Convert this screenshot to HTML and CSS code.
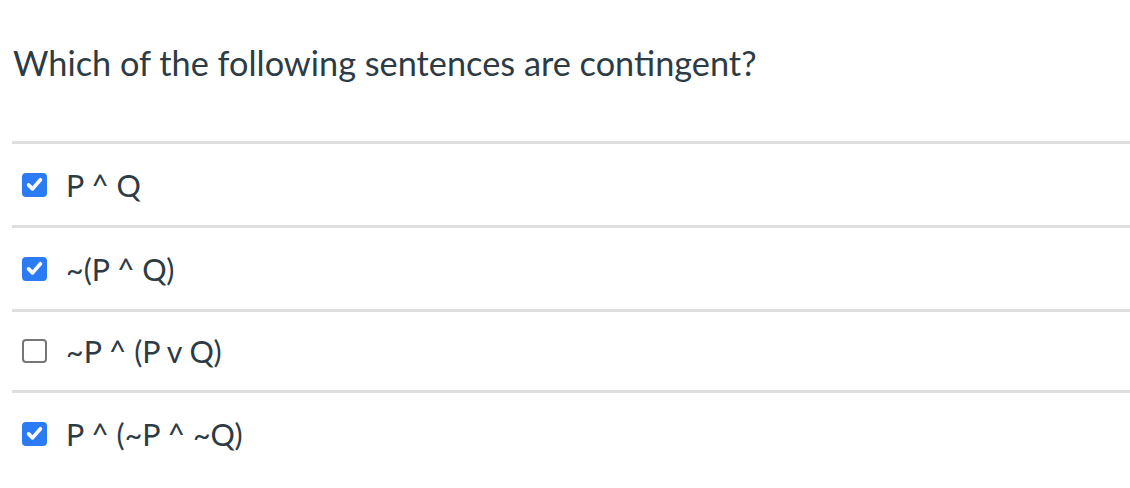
FILE: index.html
```html
<!DOCTYPE html>
<html>
<head>
<meta charset="utf-8">
<link rel="stylesheet" href="styles.css">
</head>
<body>
<div class="question">
  <div class="prompt">Which of the following sentences are contingent?</div>
  <div class="answers">
    <div class="answer">
      <span class="box checked"><svg viewBox="0 0 24 24" width="19" height="19"><path d="M4.5 12.5 L9.5 17.5 L19.5 6" fill="none" stroke="#fff" stroke-width="4.6" stroke-linecap="round" stroke-linejoin="round"/></svg></span>
      <span class="label">P ^ Q</span>
    </div>
    <div class="answer">
      <span class="box checked"><svg viewBox="0 0 24 24" width="19" height="19"><path d="M4.5 12.5 L9.5 17.5 L19.5 6" fill="none" stroke="#fff" stroke-width="4.6" stroke-linecap="round" stroke-linejoin="round"/></svg></span>
      <span class="label">~(P ^ Q)</span>
    </div>
    <div class="answer short">
      <span class="box"></span>
      <span class="label">~P ^ (P v Q)</span>
    </div>
    <div class="answer last">
      <span class="box checked"><svg viewBox="0 0 24 24" width="19" height="19"><path d="M4.5 12.5 L9.5 17.5 L19.5 6" fill="none" stroke="#fff" stroke-width="4.6" stroke-linecap="round" stroke-linejoin="round"/></svg></span>
      <span class="label">P ^ (~P ^ ~Q)</span>
    </div>
  </div>
</div>
</body>
</html>
```
FILE: styles.css
```css
html, body {
  margin: 0;
  padding: 0;
  background: #fff;
}
body {
  font-family: Lato, "Noto Sans", sans-serif;
  color: #2d3b45;
}
.question {
  padding: 39px 0 0 12px;
}
.prompt {
  font-size: 34.3px;
  line-height: 48px;
  padding-left: 1px;
  margin-bottom: 54px;
}
.answers {
  border-top: 3px solid #dedede;
}
.answer {
  display: flex;
  align-items: center;
  height: 81px;
  border-bottom: 3px solid #dedede;
  padding-left: 10px;
}
.answer.short {
  height: 78px;
}
.answer.last {
  border-bottom: none;
}
.box {
  width: 25px;
  height: 24px;
  box-sizing: border-box;
  border: 2px solid #767676;
  border-radius: 4px;
  display: flex;
  align-items: center;
  justify-content: center;
  margin-right: 19px;
  background: #fff;
}
.box.checked {
  background: #2b7bf5;
  border-color: #2b7bf5;
}
.label {
  font-size: 30.4px;
}
```
